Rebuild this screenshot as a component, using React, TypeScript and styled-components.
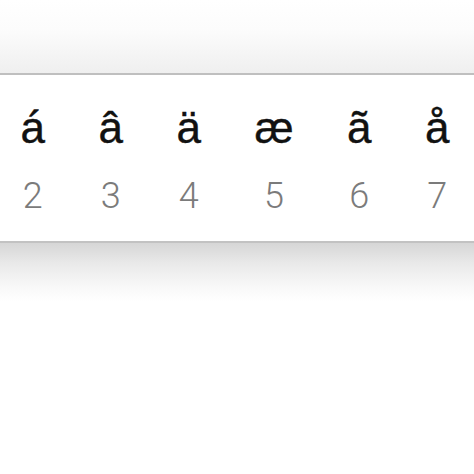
import React from "react";
import styled, { createGlobalStyle } from "styled-components";

const GlobalStyle = createGlobalStyle`
  html, body {
    margin: 0;
    padding: 0;
    background: #ffffff;
  }
`;

const Screen = styled.div`
  width: 474px;
  height: 474px;
  display: flex;
  flex-direction: column;
  background: #ffffff;
  font-family: "Liberation Sans", Arial, sans-serif;
`;

const TopShade = styled.div`
  height: 73px;
  background: linear-gradient(#ffffff 0%, #fcfcfc 40%, #efefef 100%);
`;

const Panel = styled.div`
  display: flex;
  gap: 53.5px;
  padding: 31px 0 0 20.5px;
  height: 135px;
  background: #ffffff;
  border-top: 2px solid #bfbfbf;
  border-bottom: 2px solid #c2c2c2;
`;

const Key = styled.div`
  display: flex;
  flex-direction: column;
  align-items: center;
  gap: 28px;
`;

const Glyph = styled.span`
  font-size: 44px;
  line-height: 44px;
  color: #111111;
  -webkit-text-stroke: 0.4px #111111;
`;

const Digit = styled.span`
  font-family: Roboto, "Liberation Sans", sans-serif;
  font-size: 36px;
  line-height: 36px;
  color: #7b7b7b;
  font-weight: 300;
`;

const BottomShade = styled.div`
  height: 58px;
  background: linear-gradient(#d6d6d6 0%, #e9e9e9 35%, #f8f8f8 75%, #ffffff 100%);
`;

const keys = [
  { glyph: "á", digit: "2" },
  { glyph: "â", digit: "3" },
  { glyph: "ä", digit: "4" },
  { glyph: "æ", digit: "5" },
  { glyph: "ã", digit: "6" },
  { glyph: "å", digit: "7" },
];

export default function App() {
  return (
    <>
      <GlobalStyle />
      <Screen>
        <TopShade />
        <Panel>
          {keys.map((k) => (
            <Key key={k.digit}>
              <Glyph>{k.glyph}</Glyph>
              <Digit>{k.digit}</Digit>
            </Key>
          ))}
        </Panel>
        <BottomShade />
      </Screen>
    </>
  );
}
